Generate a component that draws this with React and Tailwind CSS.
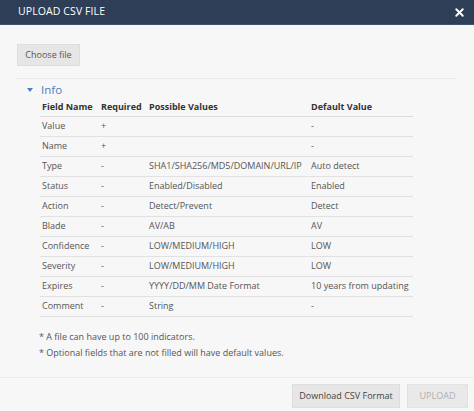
import { X } from 'lucide-react';

const rows = [
    ['Value', '+', '', '-'],
    ['Name', '+', '', '-'],
    ['Type', '-', 'SHA1/SHA256/MD5/DOMAIN/URL/IP', 'Auto detect'],
    ['Status', '-', 'Enabled/Disabled', 'Enabled'],
    ['Action', '-', 'Detect/Prevent', 'Detect'],
    ['Blade', '-', 'AV/AB', 'AV'],
    ['Confidence', '-', 'LOW/MEDIUM/HIGH', 'LOW'],
    ['Severity', '-', 'LOW/MEDIUM/HIGH', 'LOW'],
    ['Expires', '-', 'YYYY/DD/MM Date Format', '10 years from updating'],
    ['Comment', '-', 'String', '-'],
];

export default function App() {
    return (
        <div className="w-[474px] h-[411px] bg-[#f7f7f7] flex flex-col overflow-hidden" style={{ fontFamily: '"Open Sans", sans-serif' }}>
            {/* header */}
            <div className="h-[25px] flex-shrink-0 bg-[#2d3e56] border-b border-[#41536c] flex items-center justify-between pl-[18px] pr-[8px]">
                <span className="text-[10.5px] text-white tracking-[0.1px]">UPLOAD CSV FILE</span>
                <X size={13} strokeWidth={3.5} className="text-white" />
            </div>

            {/* body */}
            <div className="flex-grow px-[17px] pt-[19px]">
                <button className="block h-[22px] w-[63px] bg-[#e6e6e6] border border-[#dedede] text-[9px] text-[#555]">
                    Choose file
                </button>
                <div className="mt-[12px] mr-[2px] h-px bg-[#e9e9e9]" />

                <div className="flex items-center h-[17px] mt-[2px] pl-[10px]">
                    <svg width="6" height="4" viewBox="0 0 6 4" className="mr-[8px]">
                        <path d="M0 0 L6 0 L3 4 Z" fill="#4a7fc1" />
                    </svg>
                    <span className="text-[11.5px] text-[#4a7fc1] leading-none">Info</span>
                </div>

                <table className="ml-[23px] w-[373px] border-collapse text-[9px] text-[#555]">
                    <colgroup>
                        <col className="w-[59px]" />
                        <col className="w-[48px]" />
                        <col className="w-[162px]" />
                        <col className="w-[104px]" />
                    </colgroup>
                    <thead>
                        <tr className="h-[18px] border-b border-[#dcdcdc]">
                            <th className="text-left font-bold text-[#333] pl-[2px] whitespace-nowrap">Field Name</th>
                            <th className="text-left font-bold text-[#333] pl-[2px]">Required</th>
                            <th className="text-left font-bold text-[#333] pl-[2px]">Possible Values</th>
                            <th className="text-left font-bold text-[#333] pl-[2px]">Default Value</th>
                        </tr>
                    </thead>
                    <tbody>
                        {rows.map((r) => (
                            <tr key={r[0]} className="h-[20px] border-b border-[#e1e1e1]">
                                <td className="pl-[2px] whitespace-nowrap">{r[0]}</td>
                                <td className="pl-[2px]">{r[1]}</td>
                                <td className="pl-[2px] whitespace-nowrap">{r[2]}</td>
                                <td className="pl-[2px] whitespace-nowrap">{r[3]}</td>
                            </tr>
                        ))}
                    </tbody>
                </table>

                <div className="mt-[12px] pl-[22px] text-[9px] text-[#555] leading-[16px]">
                    <p>* A file can have up to 100 indicators.</p>
                    <p>* Optional fields that are not filled will have default values.</p>
                </div>
            </div>

            {/* footer */}
            <div className="h-[34px] flex-shrink-0 border-t border-[#ececec] flex items-start justify-end gap-[7px] pt-[6px] pr-[6px]">
                <button className="h-[24px] w-[108px] bg-[#e6e6e6] border border-[#dedede] text-[9px] text-[#444]">
                    Download CSV Format
                </button>
                <button className="h-[24px] w-[61px] bg-[#e9e9e9] border border-[#e2e2e2] text-[9px] text-[#b0b0b0]">
                    UPLOAD
                </button>
            </div>
        </div>
    );
}
